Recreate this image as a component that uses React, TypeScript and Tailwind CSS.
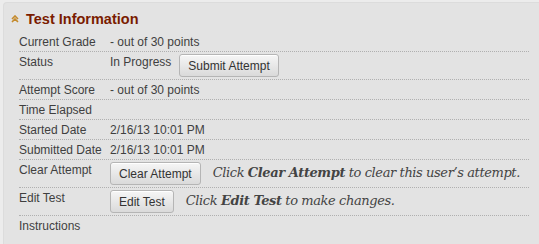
import React from 'react';

const Btn: React.FC<{ label: string }> = ({ label }) => (
  <button className="mt-[2px] mb-[2px] h-[23px] px-[8px] rounded-[3px] border border-[#b5b5b5] bg-gradient-to-b from-[#f6f6f6] to-[#dadada] text-[12px] leading-none text-[#333] shadow-[inset_0_1px_0_#fff]">
    {label}
  </button>
);

const Hint: React.FC<{ bold: string; rest: string }> = ({ bold, rest }) => (
  <span className="ml-[12px] mt-[3px] text-[13px] leading-[19px] italic text-[#444] font-['DejaVu_Serif',serif] tracking-[-0.4px]">
    Click <b className="font-bold">{bold}</b> {rest}
  </span>
);

export default function App() {
  const rows: { label: string; value?: React.ReactNode; tall?: boolean }[] = [
    { label: 'Current Grade', value: '- out of 30 points' },
    {
      label: 'Status',
      tall: true,
      value: (
        <div className="flex items-start">
          <span className="mr-[8px]">In Progress</span>
          <Btn label="Submit Attempt" />
        </div>
      ),
    },
    { label: 'Attempt Score', value: '- out of 30 points' },
    { label: 'Time Elapsed' },
    { label: 'Started Date', value: '2/16/13 10:01 PM' },
    { label: 'Submitted Date', value: '2/16/13 10:01 PM' },
    {
      label: 'Clear Attempt',
      tall: true,
      value: (
        <div className="flex items-start">
          <Btn label="Clear Attempt" />
          <Hint bold="Clear Attempt" rest="to clear this user’s attempt." />
        </div>
      ),
    },
    {
      label: 'Edit Test',
      tall: true,
      value: (
        <div className="flex items-start">
          <Btn label="Edit Test" />
          <Hint bold="Edit Test" rest="to make changes." />
        </div>
      ),
    },
    { label: 'Instructions' },
  ];

  return (
    <div className="w-[539px] h-[244px] bg-[#ececec] font-['Liberation_Sans',Arial,sans-serif] overflow-hidden">
      <div className="ml-[3px] mt-[2px] h-[242px] rounded-tl-[4px] bg-[#e3e3e3] border-t border-l border-[#dcdcdc]">
        <div className="flex items-center pt-[4px] h-[28px] mb-[1px]">
          <svg className="ml-[7px] mr-[7px]" width="8" height="8" viewBox="0 0 8 8">
            <path d="M1 4 L4 1 L7 4 M1 7 L4 4 L7 7" fill="none" stroke="#c48a2c" strokeWidth="1.6" />
          </svg>
          <h2 className="text-[14.5px] font-bold text-[#7a1c00] leading-[20px]">Test Information</h2>
        </div>
        <div className="ml-[15px] mr-[10px] text-[12px] text-[#3f3f3f]">
          {rows.map((r, i) => (
            <div
              key={r.label}
              className={
                'flex items-start ' +
                (i < rows.length - 1 ? 'border-b border-dotted border-[#b0b0b0] ' : '') +
                (r.tall ? 'h-[28px]' : 'h-[20px]')
              }
            >
              <div className="w-[91px] shrink-0 leading-[20px]">{r.label}</div>
              <div className="leading-[20px]">{r.value}</div>
            </div>
          ))}
        </div>
      </div>
    </div>
  );
}
